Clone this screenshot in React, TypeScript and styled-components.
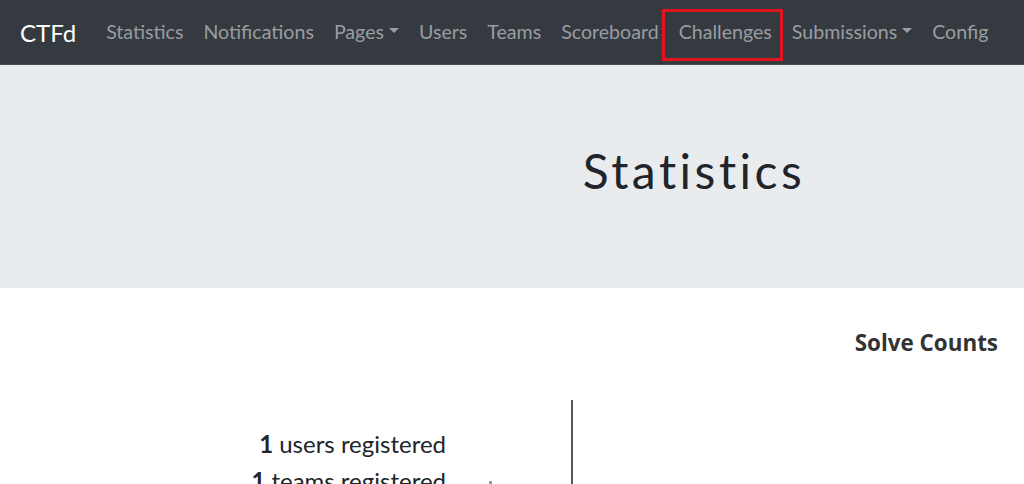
import React from "react";
import styled, { createGlobalStyle } from "styled-components";

const Global = createGlobalStyle`
  html, body { margin: 0; padding: 0; background: #fff; overflow: hidden; }
  body { font-family: Lato, "Liberation Sans", sans-serif; }
  * { box-sizing: border-box; }
`;

const Nav = styled.nav`
  height: 65px;
  background: #343a40;
  display: flex;
  align-items: center;
  padding-left: 20px;
  border-bottom: 1px solid #4a5057;
`;

const Brand = styled.a`
  color: #fff;
  font-family: Lato, sans-serif;
  font-size: 24px;
  margin-right: 20px;
  text-decoration: none;
`;

const NavList = styled.ul`
  display: flex;
  list-style: none;
  margin: 0;
  padding: 0;
  align-items: center;
`;

const NavItem = styled.li`
  position: relative;
  padding: 0 10px;
  color: #9a9da0;
  font-size: 19.6px;
  line-height: 64px;
  display: flex;
  align-items: center;
  white-space: nowrap;
`;

const Highlight = styled.span`
  position: absolute;
  left: -7px;
  right: -1px;
  top: 9px;
  bottom: 3px;
  border: 3px solid #e3141f;
  pointer-events: none;
`;

const Caret = styled.span`
  display: inline-block;
  margin-left: 5px;
  width: 0;
  height: 0;
  border-left: 5px solid transparent;
  border-right: 5px solid transparent;
  border-top: 5px solid #9a9da0;
  margin-top: -3px;
`;

const Jumbo = styled.header`
  height: 223px;
  background: #e9ecef;
  display: flex;
  align-items: center;
  width: 1388px;
`;

const JumboTitle = styled.h1`
  margin: 0;
  width: 100%;
  text-align: center;
  font-family: Lato, sans-serif;
  font-weight: 400;
  font-size: 48px;
  letter-spacing: 3.5px;
  color: #212529;
  margin-top: -12px;
`;

const Section = styled.section`
  width: 1024px;
  padding-top: 40px;
`;

const ChartTitle = styled.h3`
  margin: 0;
  padding-right: 26px;
  text-align: right;
  font-family: "Open Sans", sans-serif;
  font-weight: 700;
  font-size: 22.4px;
  color: #333;
  line-height: 30px;
`;

const Body = styled.div`
  display: grid;
  grid-template-columns: 446px 125px 1fr;
  margin-top: 42px;
  height: 120px;
`;

const Stats = styled.div`
  text-align: right;
  padding-top: 25px;
  font-size: 24px;
  color: #212529;
  line-height: 37px;
`;

const StatLine = styled.div``;

const Num = styled.b`
  font-weight: 700;
  margin-right: 6px;
`;

const TickCol = styled.div`
  position: relative;
`;

const Tick = styled.span`
  position: absolute;
  left: 43px;
  top: 81px;
  width: 3px;
  height: 3px;
  background: #999;
`;

const Axis = styled.div`
  border-left: 2px solid #555;
`;

const links = [
  "Statistics",
  "Notifications",
  "Pages",
  "Users",
  "Teams",
  "Scoreboard",
  "Challenges",
  "Submissions",
  "Config",
];

export default function App() {
  return (
    <>
      <Global />
      <Nav>
        <Brand>CTFd</Brand>
        <NavList>
          {links.map((l) => (
            <NavItem key={l}>
              {l}
              {(l === "Pages" || l === "Submissions") && <Caret />}
              {l === "Challenges" && <Highlight />}
            </NavItem>
          ))}
        </NavList>
      </Nav>
      <Jumbo>
        <JumboTitle>Statistics</JumboTitle>
      </Jumbo>
      <Section>
        <ChartTitle>Solve Counts</ChartTitle>
        <Body>
          <Stats>
            <StatLine>
              <Num>1</Num>users registered
            </StatLine>
            <StatLine>
              <Num>1</Num>teams registered
            </StatLine>
          </Stats>
          <TickCol>
            <Tick />
          </TickCol>
          <Axis />
        </Body>
      </Section>
    </>
  );
}
